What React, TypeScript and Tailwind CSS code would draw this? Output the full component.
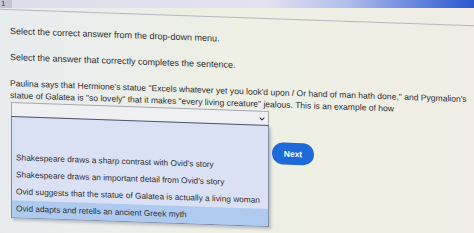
import { ChevronDown } from 'lucide-react';

const options = [
  'Shakespeare draws a sharp contrast with Ovid\u2019s story',
  'Shakespeare draws an important detail from Ovid\u2019s story',
  'Ovid suggests that the statue of Galatea is actually a living woman',
  'Ovid adapts and retells an ancient Greek myth',
];

export default function App() {
  return (
    <div className="h-[233px] w-[474px] overflow-hidden bg-gradient-to-r from-[#e8ecef] via-[#eef0e4] to-[#f1ede6] font-['Liberation_Sans',Arial,sans-serif] text-[#2e2e30]">
      {/* header strip */}
      <div className="flex h-[8px]">
        <div className="flex w-[12px] items-end bg-[#c3c6d2] pl-[1px] text-[8px] leading-none text-[#444]">1</div>
        <div className="flex-1 bg-[linear-gradient(to_right,#dcdfe9_0%,#e4e1f0_55%,#b3bfec_72%,#4f74da_92%,#2a56cc_100%)]" />
      </div>

      <div className="skew-y-2">
        <div className="mt-[9px] h-px bg-[#b4b8c0]" />

        <div className="pl-[10px] text-[9px] leading-[12px]">
          <p className="mt-[15px]">Select the correct answer from the drop-down menu.</p>
          <p className="mt-[14px]">Select the answer that correctly completes the sentence.</p>
          <p className="mt-[14px] whitespace-nowrap text-[8.55px]">
            Paulina says that Hermione&apos;s statue &quot;Excels whatever yet you look&apos;d upon / Or hand of man hath done,&quot; and Pygmalion&apos;s
            <br />
            statue of Galatea is &quot;so lovely&quot; that it makes &quot;every living creature&quot; jealous. This is an example of how
          </p>
        </div>

        <div className="mt-px flex items-start pl-[11px]">
          <div className="w-[258px]">
            <div className="flex h-[14px] items-center justify-end border border-b-0 border-[#a3a8b2] bg-[#eef0f2] pr-[2px]">
              <ChevronDown size={8} strokeWidth={3} className="text-[#333]" />
            </div>
            <div className="border border-[#7f8aa6] border-t-[#4e5566] bg-[#dae1f4] pt-[32px] shadow-[2px_2px_3px_rgba(90,100,130,0.35)]">
              {options.map((o, i) => (
                <div
                  key={o}
                  className={`flex h-[17px] items-center whitespace-nowrap pl-[4px] text-[8.3px] ${
                    i === 3 ? 'bg-[#aecbef]' : ''
                  }`}
                >
                  {o}
                </div>
              ))}
            </div>
          </div>
          <button className="ml-[3px] mt-[31px] flex h-[22px] w-[42px] items-center justify-center rounded-full bg-[#1d6ad8] text-[8.5px] font-bold text-white">
            Next
          </button>
        </div>
      </div>
    </div>
  );
}
